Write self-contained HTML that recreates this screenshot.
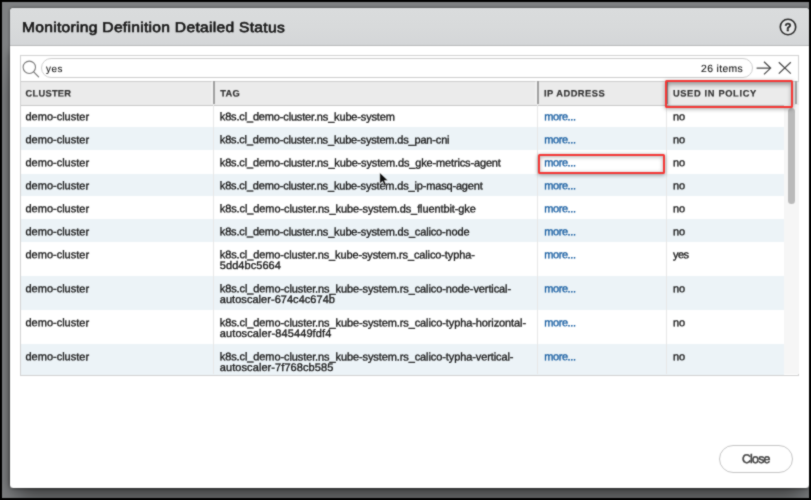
<!DOCTYPE html>
<html><head><meta charset="utf-8"><title>Monitoring Definition Detailed Status</title>
<style>
*{box-sizing:border-box;margin:0;padding:0}
html,body{width:811px;height:500px;overflow:hidden;background:#000}
body{position:relative;font-family:"Liberation Sans",sans-serif;color:#222}
#all{position:absolute;left:0;top:0;width:811px;height:500px;will-change:transform;background:#000;filter:url(#bl)}
.a{position:absolute}
.t{transform-origin:0 0;transform:rotate(.03deg)}
#frame{left:2px;top:2px;width:806.8px;height:495.8px;background:#7e8082;overflow:hidden}
#dlg{left:7.6px;top:6.2px;width:799.3px;height:480px;background:#fff;border-radius:3.5px;box-shadow:0 0 3px rgba(0,0,0,.55)}
#sh{left:7.6px;top:50px;width:799.3px;height:436px;box-shadow:0 0 8px rgba(0,0,0,.4),0 19px 22px -6px rgba(0,0,0,.44)}
#hd{left:9.6px;top:8.2px;width:799.3px;height:37.6px;background:linear-gradient(180deg,#dadcdd 0,#d8dadb 50%,#d4d6d8 100%);border-bottom:1.6px solid #b8babb;border-radius:3.5px 3.5px 0 0}
#title{left:21.6px;top:17px;font-size:14.1px;letter-spacing:.25px;line-height:20px;color:#161616;white-space:nowrap;-webkit-text-stroke:.62px #161616}
.th{font-size:9.3px;line-height:12px;font-weight:bold;color:#333;-webkit-text-stroke:.18px #333;white-space:nowrap}
.c{font-size:11px;line-height:11.6px;white-space:nowrap;color:#181818;-webkit-text-stroke:.33px #181818}
.lnk{color:#195fa2;-webkit-text-stroke:.33px #195fa2}
.alt{background:#ecf3f7}
.red{border:2px solid #f43836;border-radius:1.5px}
</style></head><body><svg width="0" height="0" style="position:absolute"><filter id="bl" x="0" y="0" width="100%" height="100%" color-interpolation-filters="sRGB"><feConvolveMatrix order="3" kernelMatrix="0.5 1.5 0.5 1.5 8 1.5 0.5 1.5 0.5" divisor="16" edgeMode="duplicate" preserveAlpha="true"/></filter></svg><div id="all">
<div id="frame" class="a"><div id="sh" class="a"></div><div id="dlg" class="a"></div></div>
<div id="hd" class="a"></div>
<div id="title" class="a" style="transform-origin:0 0;transform:rotate(.03deg) scale(1.1086,1)">Monitoring Definition Detailed Status</div>
<svg class="a" style="left:779.4px;top:18px;width:18px;height:18px" viewBox="0 0 18 18"><circle cx="9" cy="9" r="7.7" fill="#e6e7e8" stroke="#2b2b2b" stroke-width="1.6"/><text x="9" y="13.2" font-family="Liberation Sans, sans-serif" font-size="11.5" font-weight="bold" text-anchor="middle" fill="#262626" stroke="#262626" stroke-width=".45">?</text></svg>
<div class="a" style="left:19.6px;top:55.1px;width:779.7px;height:320.9px;border:1.1px solid #d2d2d2;background:#fff"></div>
<svg class="a" style="left:20px;top:57px;width:22px;height:22px" viewBox="0 0 22 22"><circle cx="9.3" cy="10.3" r="6.2" fill="none" stroke="#7c7c7c" stroke-width="1.1"/><path d="M13.7 14.8 L18.6 19.8" stroke="#7c7c7c" stroke-width="1.2" fill="none" stroke-linecap="round"/></svg>
<div class="a" style="left:41px;top:58.3px;width:711.7px;height:20.2px;border:1.2px solid #cecece;border-radius:10.1px;background:#fff"></div>
<div class="a c t" style="left:45.6px;top:63.4px;font-size:9.8px;-webkit-text-stroke-width:.12px;letter-spacing:0.53px">yes</div>
<div class="a c t" style="left:701px;top:63.1px;font-size:10.4px;-webkit-text-stroke-width:.12px;letter-spacing:0.36px">26 items</div>
<svg class="a" style="left:755px;top:60px;width:18px;height:16px" viewBox="0 0 18 16"><path d="M1.6 8.1 H15.4 M9 1.8 L15.6 8.1 L9 14.4" stroke="#4a4a4a" stroke-width="1.25" fill="none"/></svg>
<svg class="a" style="left:777px;top:60px;width:16px;height:16px" viewBox="0 0 16 16"><path d="M1.8 2.2 L13.8 13.6 M13.8 2.2 L1.8 13.6" stroke="#4a4a4a" stroke-width="1.25" fill="none"/></svg>
<div class="a" style="left:21px;top:80.8px;width:778px;height:25px;background:#ebebeb;border-top:1.2px solid #cdcdcd;border-bottom:1.6px solid #c9c9c9"></div>
<div class="a th t" style="left:25px;top:87px;transform:translate(0.60px,0.50px) rotate(.03deg);letter-spacing:0.25px">CLUSTER</div>
<div class="a th t" style="left:220px;top:87px;transform:translate(0.20px,0.50px) rotate(.03deg);letter-spacing:0.33px">TAG</div>
<div class="a th t" style="left:544px;top:87px;transform:translate(0.00px,0.50px) rotate(.03deg);letter-spacing:0.48px">IP ADDRESS</div>
<div class="a th t" style="left:672px;top:87px;transform:translate(0.90px,0.50px) rotate(.03deg);letter-spacing:0.65px">USED IN POLICY</div>
<div class="a c t" style="left:25px;top:111px;transform:translate(0.50px,0.35px) rotate(.03deg);letter-spacing:0px">demo-cluster</div>
<div class="a c t" style="left:219px;top:111px;transform:translate(0.80px,0.35px) rotate(.03deg);letter-spacing:-0.16px">k8s.cl_demo-cluster.ns_kube-system</div>
<div class="a c lnk t" style="left:544px;top:111px;transform:translate(0.20px,0.35px) rotate(.03deg);letter-spacing:-0.41px">more...</div>
<div class="a c t" style="left:673px;top:111px;transform:translate(0.00px,0.35px) rotate(.03deg);letter-spacing:-0.05px">no</div>
<div class="a alt" style="left:21px;top:127.2px;width:763.2px;height:22.8px"></div>
<div class="a c t" style="left:25px;top:134px;transform:translate(0.50px,0.35px) rotate(.03deg);letter-spacing:0px">demo-cluster</div>
<div class="a c t" style="left:219px;top:134px;transform:translate(0.80px,0.35px) rotate(.03deg);letter-spacing:-0.17px">k8s.cl_demo-cluster.ns_kube-system.ds_pan-cni</div>
<div class="a c lnk t" style="left:544px;top:134px;transform:translate(0.20px,0.35px) rotate(.03deg);letter-spacing:-0.41px">more...</div>
<div class="a c t" style="left:673px;top:134px;transform:translate(0.00px,0.35px) rotate(.03deg);letter-spacing:-0.05px">no</div>
<div class="a c t" style="left:25px;top:157px;transform:translate(0.50px,0.35px) rotate(.03deg);letter-spacing:0px">demo-cluster</div>
<div class="a c t" style="left:219px;top:157px;transform:translate(0.80px,0.35px) rotate(.03deg);letter-spacing:-0.15px">k8s.cl_demo-cluster.ns_kube-system.ds_gke-metrics-agent</div>
<div class="a c lnk t" style="left:544px;top:157px;transform:translate(0.20px,0.35px) rotate(.03deg);letter-spacing:-0.41px">more...</div>
<div class="a c t" style="left:673px;top:157px;transform:translate(0.00px,0.35px) rotate(.03deg);letter-spacing:-0.05px">no</div>
<div class="a alt" style="left:21px;top:173.5px;width:763.2px;height:22.5px"></div>
<div class="a c t" style="left:25px;top:180px;transform:translate(0.50px,0.35px) rotate(.03deg);letter-spacing:0px">demo-cluster</div>
<div class="a c t" style="left:219px;top:180px;transform:translate(0.80px,0.35px) rotate(.03deg);letter-spacing:-0.17px">k8s.cl_demo-cluster.ns_kube-system.ds_ip-masq-agent</div>
<div class="a c lnk t" style="left:544px;top:180px;transform:translate(0.20px,0.35px) rotate(.03deg);letter-spacing:-0.41px">more...</div>
<div class="a c t" style="left:673px;top:180px;transform:translate(0.00px,0.35px) rotate(.03deg);letter-spacing:-0.05px">no</div>
<div class="a c t" style="left:25px;top:203px;transform:translate(0.50px,0.35px) rotate(.03deg);letter-spacing:0px">demo-cluster</div>
<div class="a c t" style="left:219px;top:203px;transform:translate(0.80px,0.35px) rotate(.03deg);letter-spacing:-0.1px">k8s.cl_demo-cluster.ns_kube-system.ds_fluentbit-gke</div>
<div class="a c lnk t" style="left:544px;top:203px;transform:translate(0.20px,0.35px) rotate(.03deg);letter-spacing:-0.41px">more...</div>
<div class="a c t" style="left:673px;top:203px;transform:translate(0.00px,0.35px) rotate(.03deg);letter-spacing:-0.05px">no</div>
<div class="a alt" style="left:21px;top:219px;width:763.2px;height:23px"></div>
<div class="a c t" style="left:25px;top:226px;transform:translate(0.50px,0.35px) rotate(.03deg);letter-spacing:0px">demo-cluster</div>
<div class="a c t" style="left:219px;top:226px;transform:translate(0.80px,0.35px) rotate(.03deg);letter-spacing:-0.16px">k8s.cl_demo-cluster.ns_kube-system.ds_calico-node</div>
<div class="a c lnk t" style="left:544px;top:226px;transform:translate(0.20px,0.35px) rotate(.03deg);letter-spacing:-0.41px">more...</div>
<div class="a c t" style="left:673px;top:226px;transform:translate(0.00px,0.35px) rotate(.03deg);letter-spacing:-0.05px">no</div>
<div class="a c t" style="left:25px;top:249px;transform:translate(0.50px,0.35px) rotate(.03deg);letter-spacing:0px">demo-cluster</div>
<div class="a c t" style="left:219px;top:249px;transform:translate(0.80px,0.35px) rotate(.03deg);letter-spacing:-0.12px">k8s.cl_demo-cluster.ns_kube-system.rs_calico-typha-</div>
<div class="a c t" style="left:219px;top:260px;transform:translate(0.80px,0.05px) rotate(.03deg);letter-spacing:0.06px">5dd4bc5664</div>
<div class="a c lnk t" style="left:544px;top:249px;transform:translate(0.20px,0.35px) rotate(.03deg);letter-spacing:-0.41px">more...</div>
<div class="a c t" style="left:673px;top:249px;transform:translate(0.00px,0.35px) rotate(.03deg);letter-spacing:-0.56px">yes</div>
<div class="a alt" style="left:21px;top:276px;width:763.2px;height:33.6px"></div>
<div class="a c t" style="left:25px;top:283px;transform:translate(0.50px,0.35px) rotate(.03deg);letter-spacing:0px">demo-cluster</div>
<div class="a c t" style="left:219px;top:283px;transform:translate(0.80px,0.35px) rotate(.03deg);letter-spacing:-0.1px">k8s.cl_demo-cluster.ns_kube-system.rs_calico-node-vertical-</div>
<div class="a c t" style="left:219px;top:294px;transform:translate(0.80px,0.05px) rotate(.03deg);letter-spacing:0.04px">autoscaler-674c4c674b</div>
<div class="a c lnk t" style="left:544px;top:283px;transform:translate(0.20px,0.35px) rotate(.03deg);letter-spacing:-0.41px">more...</div>
<div class="a c t" style="left:673px;top:283px;transform:translate(0.00px,0.35px) rotate(.03deg);letter-spacing:-0.05px">no</div>
<div class="a c t" style="left:25px;top:317px;transform:translate(0.50px,0.35px) rotate(.03deg);letter-spacing:0px">demo-cluster</div>
<div class="a c t" style="left:219px;top:317px;transform:translate(0.80px,0.35px) rotate(.03deg);letter-spacing:-0.1px">k8s.cl_demo-cluster.ns_kube-system.rs_calico-typha-horizontal-</div>
<div class="a c t" style="left:219px;top:328px;transform:translate(0.80px,0.05px) rotate(.03deg);letter-spacing:0.1px">autoscaler-845449fdf4</div>
<div class="a c lnk t" style="left:544px;top:317px;transform:translate(0.20px,0.35px) rotate(.03deg);letter-spacing:-0.41px">more...</div>
<div class="a c t" style="left:673px;top:317px;transform:translate(0.00px,0.35px) rotate(.03deg);letter-spacing:-0.05px">no</div>
<div class="a alt" style="left:21px;top:343.8px;width:763.2px;height:31.2px"></div>
<div class="a c t" style="left:25px;top:351px;transform:translate(0.50px,0.35px) rotate(.03deg);letter-spacing:0px">demo-cluster</div>
<div class="a c t" style="left:219px;top:351px;transform:translate(0.80px,0.35px) rotate(.03deg);letter-spacing:-0.1px">k8s.cl_demo-cluster.ns_kube-system.rs_calico-typha-vertical-</div>
<div class="a c t" style="left:219px;top:362px;transform:translate(0.80px,0.05px) rotate(.03deg);letter-spacing:0.08px">autoscaler-7f768cb585</div>
<div class="a c lnk t" style="left:544px;top:351px;transform:translate(0.20px,0.35px) rotate(.03deg);letter-spacing:-0.41px">more...</div>
<div class="a c t" style="left:673px;top:351px;transform:translate(0.00px,0.35px) rotate(.03deg);letter-spacing:-0.05px">no</div>
<div class="a" style="left:213px;top:81.2px;width:1.6px;height:22.8px;background:#a0a0a0;box-shadow:-1.5px 0 0 rgba(255,255,255,.45)"></div>
<div class="a" style="left:213px;top:105.3px;width:1.3px;height:269.2px;background:#e7e7e7"></div>
<div class="a" style="left:537px;top:81.2px;width:1.6px;height:22.8px;background:#a0a0a0;box-shadow:-1.5px 0 0 rgba(255,255,255,.45)"></div>
<div class="a" style="left:537px;top:105.3px;width:1.3px;height:269.2px;background:#e7e7e7"></div>
<div class="a" style="left:666px;top:81.2px;width:1.6px;height:22.8px;background:#a0a0a0;box-shadow:-1.5px 0 0 rgba(255,255,255,.45)"></div>
<div class="a" style="left:666px;top:105.3px;width:1.3px;height:269.2px;background:#e7e7e7"></div>
<div class="a" style="left:784.2px;top:105.3px;width:14.6px;height:269.2px;background:#f6f6f6"></div>
<div class="a" style="left:795.4px;top:81.3px;width:1.8px;height:22.7px;background:#a8a8a8"></div>
<div class="a" style="left:788.3px;top:108.2px;width:7px;height:96px;background:#bababa;border-radius:3.5px"></div>
<div class="a red" style="left:665px;top:80px;width:128.1px;height:27.5px;box-shadow:0 1px 4px rgba(0,0,0,.35),inset 0 3px 4px rgba(0,0,0,.3),inset 2px 0 3px rgba(0,0,0,.12)"></div>
<div class="a red" style="left:537.8px;top:154.1px;width:127px;height:20.3px;box-shadow:0 1px 4px rgba(0,0,0,.4),inset 0 1px 4px rgba(0,0,0,.3)"></div>
<svg class="a" style="left:379.2px;top:171.6px;width:10px;height:15px" viewBox="0 0 12 18"><path d="M1 1 L1 14 L4.2 11 L6.6 16.6 L8.8 15.6 L6.4 10.2 L10.6 10.2 Z" fill="#0c0c0c" stroke="#fff" stroke-width=".5"/></svg>
<div class="a" style="left:718.8px;top:444.6px;width:74.4px;height:28px;border:1.2px solid #c6c6c6;border-radius:14px;background:#fff"></div>
<div class="a" style="left:741px;top:451px;transform:translate(0.90px,0.90px) rotate(.03deg);transform-origin:0 0;font-size:12.4px;line-height:15px;color:#444;-webkit-text-stroke:.5px #444;white-space:nowrap;letter-spacing:-0.77px">Close</div>
</div></body></html>
